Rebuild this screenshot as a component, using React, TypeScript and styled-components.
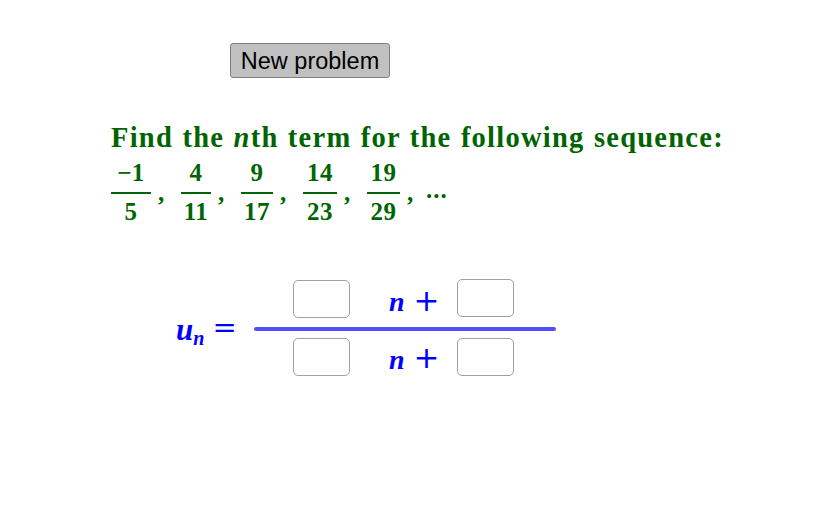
import React from 'react';
import styled, { createGlobalStyle } from 'styled-components';

const GlobalStyle = createGlobalStyle`
  html, body {
    margin: 0;
    padding: 0;
    background: #ffffff;
  }
`;

const Page = styled.div`
  width: 824px;
  height: 514px;
  overflow: hidden;
  background: #ffffff;
  display: flex;
  flex-direction: column;
`;

const ButtonRow = styled.div`
  padding: 43px 0 0 230px;
  display: flex;
`;

const ProblemButton = styled.button`
  width: 160px;
  height: 35px;
  box-sizing: border-box;
  background: #c0c0c0;
  border: 1px solid #808080;
  border-radius: 3px;
  font-family: 'Liberation Sans', Arial, sans-serif;
  font-size: 23.5px;
  line-height: 34px;
  color: #000000;
  padding: 0;
  cursor: pointer;
`;

const Prompt = styled.div`
  padding: 44px 0 0 111px;
  color: #006400;
  font-family: 'Liberation Serif', 'Times New Roman', serif;
  font-weight: bold;
`;

const Title = styled.div`
  font-size: 28.5px;
  line-height: 31px;
  letter-spacing: 1.25px;
  word-spacing: 1px;
  white-space: nowrap;

  i {
    font-style: italic;
  }
`;

const Sequence = styled.div`
  display: flex;
  align-items: center;
  margin-top: 7px;
  font-size: 25px;
`;

const Frac = styled.div<{ $w: number }>`
  display: inline-flex;
  flex-direction: column;
  align-items: center;
  width: ${(p) => p.$w}px;
`;

const Num = styled.div`
  line-height: 26px;
  height: 26px;
  letter-spacing: 0.5px;
`;

const FracBar = styled.div`
  align-self: stretch;
  height: 1.5px;
  background: #006400;
  margin: 6px 0 5.5px;
`;

const Comma = styled.span`
  display: inline-block;
  width: 30px;
  padding-left: 7px;
  box-sizing: border-box;
`;

const Ellipsis = styled.span`
  margin-left: -4px;
  margin-top: -6px;
  letter-spacing: 1px;
`;

const Formula = styled.div`
  display: flex;
  align-items: center;
  margin-top: 55px;
  padding-left: 176px;
  color: #0000ff;
  font-family: 'Liberation Serif', 'Times New Roman', serif;
  font-weight: bold;
`;

const Label = styled.div`
  width: 78px;
  display: flex;
  align-items: center;
  white-space: nowrap;
  margin-top: 4px;
`;

const Symbol = styled.span`
  font-style: italic;
  font-size: 31px;

  sub {
    font-size: 20px;
    vertical-align: -5px;
    line-height: 0;
  }
`;

const Equals = styled.span`
  font-family: 'DejaVu Sans', sans-serif;
  font-weight: normal;
  font-size: 29px;
  margin-left: 8px;
  margin-top: -6px;
`;

const Ratio = styled.div`
  width: 302px;
  display: flex;
  flex-direction: column;
`;

const Row = styled.div`
  display: flex;
  align-items: center;
  padding-left: 39px;
  height: 38px;
`;

const MainBar = styled.div`
  height: 3.5px;
  background: #5050ff;
  border-radius: 2px;
  margin: 9px 0 7px;
`;

const InputBox = styled.div<{ $lift?: number }>`
  width: 57px;
  height: 38px;
  box-sizing: border-box;
  border: 1px solid #a0a0a0;
  border-radius: 5px;
  background: #ffffff;
  margin-top: ${(p) => (p.$lift ? -p.$lift * 2 : 0)}px;
`;

const NPlus = styled.div`
  width: 107px;
  box-sizing: border-box;
  padding-left: 39px;
  display: flex;
  align-items: center;
  font-size: 28px;
  white-space: nowrap;
  margin-top: 6px;

  i {
    font-style: italic;
  }

  span {
    font-family: 'DejaVu Sans', sans-serif;
    font-weight: normal;
    font-size: 31px;
    margin-left: 9px;
    margin-top: -5px;
  }
`;

const terms = [
  { n: '\u22121', d: '5', w: 40 },
  { n: '4', d: '11', w: 30 },
  { n: '9', d: '17', w: 32 },
  { n: '14', d: '23', w: 34 },
  { n: '19', d: '29', w: 33 },
];

export default function App() {
  return (
    <>
      <GlobalStyle />
      <Page>
        <ButtonRow>
          <ProblemButton>New problem</ProblemButton>
        </ButtonRow>
        <Prompt>
          <Title>
            Find the <i>n</i>th term for the following sequence:
          </Title>
          <Sequence>
            {terms.map((t) => (
              <React.Fragment key={t.d}>
                <Frac $w={t.w}>
                  <Num>{t.n}</Num>
                  <FracBar />
                  <Num>{t.d}</Num>
                </Frac>
                <Comma>,</Comma>
              </React.Fragment>
            ))}
            <Ellipsis>...</Ellipsis>
          </Sequence>
        </Prompt>
        <Formula>
          <Label>
            <Symbol>
              u<sub>n</sub>
            </Symbol>
            <Equals>=</Equals>
          </Label>
          <Ratio>
            <Row>
              <InputBox />
              <NPlus>
                <i>n</i>
                <span>+</span>
              </NPlus>
              <InputBox $lift={1} />
            </Row>
            <MainBar />
            <Row>
              <InputBox />
              <NPlus>
                <i>n</i>
                <span>+</span>
              </NPlus>
              <InputBox />
            </Row>
          </Ratio>
        </Formula>
      </Page>
    </>
  );
}
